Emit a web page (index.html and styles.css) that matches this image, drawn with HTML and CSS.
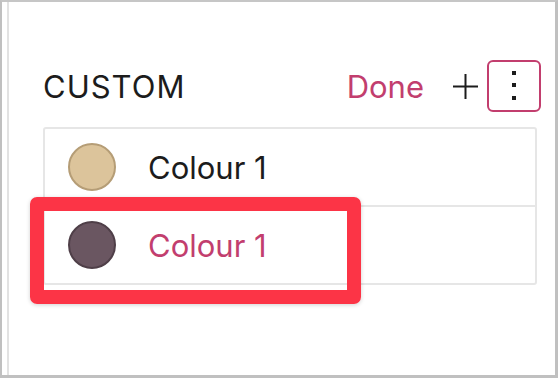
FILE: index.html
```html
<!DOCTYPE html>
<html>
<head>
<meta charset="utf-8">
<link rel="stylesheet" href="styles.css">
</head>
<body>
<div class="frame">
  <div class="panel">
    <div class="header">
      <span class="title">CUSTOM</span>
      <span class="done">Done</span>
      <svg class="plus" width="25" height="25" viewBox="0 0 25 25"><path d="M12.5 0V25M0 12.5H25" stroke="#1c1c1c" stroke-width="2" fill="none"/></svg>
      <span class="more"><svg width="6" height="30" viewBox="0 0 6 30"><rect x="1" y="0" width="4" height="4" fill="#1c1c1c"/><rect x="1" y="12" width="4" height="4" fill="#1c1c1c"/><rect x="1" y="25" width="4" height="4" fill="#1c1c1c"/></svg></span>
    </div>
    <div class="list">
      <div class="row">
        <span class="swatch sand"></span>
        <span class="name">Colour 1</span>
      </div>
      <div class="row active">
        <span class="swatch plum"></span>
        <span class="name">Colour 1</span>
        <span class="highlight"></span>
      </div>
    </div>
  </div>
</div>
</body>
</html>
```

FILE: styles.css
```css
html, body {
  margin: 0;
  padding: 0;
  background: #ffffff;
}
body {
  font-family: Inter, "Noto Sans", sans-serif;
  color: #1c1c1c;
}
.frame {
  width: 558px;
  height: 378px;
  box-sizing: border-box;
  border-top: 2px solid #c6c6c6;
  border-left: 2px solid #c0c0c0;
  border-right: 3px solid #c0c0c0;
  border-bottom: 3px solid #c0c0c0;
}
.panel {
  height: 100%;
  box-sizing: border-box;
  margin-left: 5px;
  border-left: 2px solid #e2e2e2;
  padding: 58px 14px 0 34px;
}
.header {
  display: flex;
  align-items: center;
  height: 52px;
}
.title {
  font-size: 31px;
  letter-spacing: 1px;
  flex: 1;
}
.done {
  font-size: 31px;
  color: #c23e6e;
}
.plus {
  margin-left: 29px;
  display: block;
}
.more {
  margin-left: 9px;
  width: 54px;
  height: 52px;
  box-sizing: border-box;
  border: 2px solid #c23e6e;
  border-radius: 6px;
  display: flex;
  align-items: center;
  justify-content: center;
}
.more svg {
  display: block;
}
.list {
  margin-top: 15px;
  margin-right: 4px;
  border: 2px solid #e6e6e6;
  border-radius: 3px;
}
.row {
  position: relative;
  display: flex;
  align-items: center;
  height: 76px;
  padding-left: 23px;
}
.row + .row {
  border-top: 2px solid #e6e6e6;
}
.swatch {
  width: 48px;
  height: 48px;
  border-radius: 50%;
  box-sizing: border-box;
  flex: none;
}
.sand {
  background: #dcc49b;
  border: 2px solid #b59d76;
}
.plum {
  background: #6a5661;
  border: 2px solid #4f3f48;
}
.name {
  margin-left: 32px;
  font-size: 31px;
}
.active .name {
  color: #c23e6e;
}
.highlight {
  position: absolute;
  left: -15px;
  top: -10px;
  width: 331px;
  height: 107px;
  box-sizing: border-box;
  border: 14px solid #fc3446;
  border-radius: 7px;
  box-shadow: 0 1px 4px rgba(0,0,0,0.18);
}
```
